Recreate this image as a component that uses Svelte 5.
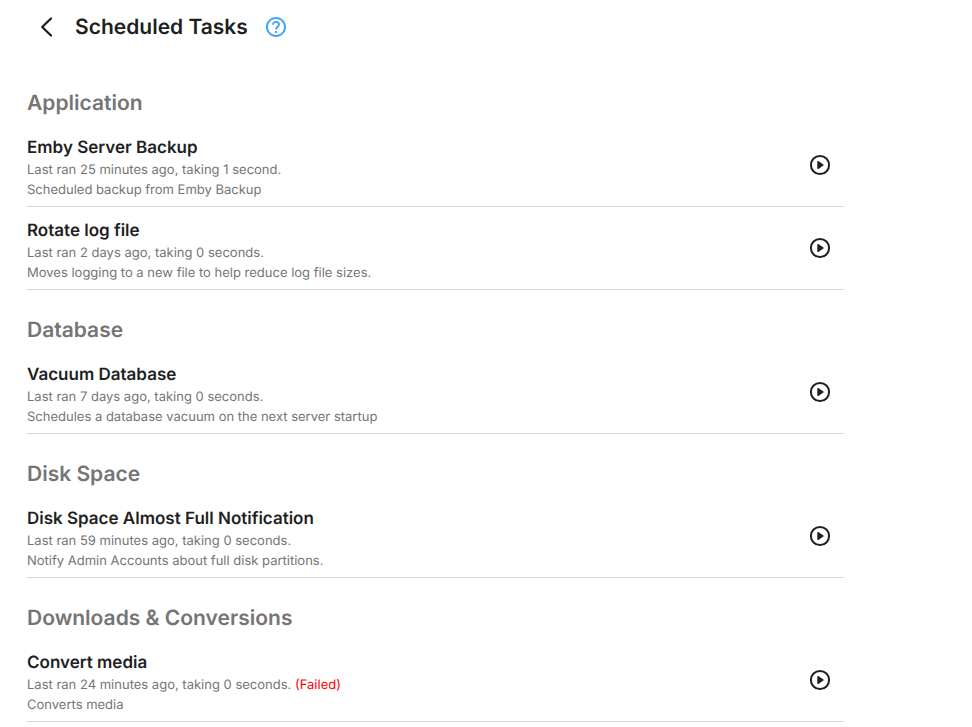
<script>
  const sections = [
    {
      name: "Application",
      tasks: [
        {
          name: "Emby Server Backup",
          lastRun: "Last ran 25 minutes ago, taking 1 second.",
          description: "Scheduled backup from Emby Backup"
        },
        {
          name: "Rotate log file",
          lastRun: "Last ran 2 days ago, taking 0 seconds.",
          description: "Moves logging to a new file to help reduce log file sizes."
        }
      ]
    },
    {
      name: "Database",
      tasks: [
        {
          name: "Vacuum Database",
          lastRun: "Last ran 7 days ago, taking 0 seconds.",
          description: "Schedules a database vacuum on the next server startup"
        }
      ]
    },
    {
      name: "Disk Space",
      tasks: [
        {
          name: "Disk Space Almost Full Notification",
          lastRun: "Last ran 59 minutes ago, taking 0 seconds.",
          description: "Notify Admin Accounts about full disk partitions."
        }
      ]
    },
    {
      name: "Downloads & Conversions",
      tasks: [
        {
          name: "Convert media",
          lastRun: "Last ran 24 minutes ago, taking 0 seconds.",
          failed: true,
          description: "Converts media"
        }
      ]
    }
  ];

  let running = $state("");
</script>

<header class="header">
  <button class="icon-button" type="button" aria-label="Back">
    <svg class="icon" viewBox="0 0 24 24" fill="none" stroke="currentColor" stroke-width="2.300" stroke-linecap="round" stroke-linejoin="round">
      <path d="M16 3.500 L7.200 12 L16 20.500" />
    </svg>
  </button>
  <h1 class="header__title">Scheduled Tasks</h1>
  <a class="header__help" href="#help" aria-label="Help">
    <svg class="icon" viewBox="0 0 24 24" fill="currentColor">
      <path d="M11 16h2v2h-2v-2zm1-14C6.480 2 2 6.480 2 12s4.480 10 10 10 10-4.480 10-10S17.520 2 12 2zm0 18c-4.410 0-8-3.590-8-8s3.590-8 8-8 8 3.590 8 8-3.590 8-8 8z" />
      <path d="M9 9.800C9 7.900 10.200 6.900 12 6.900s3 1.100 3 2.700c0 2.200-3 2.300-3 5" fill="none" stroke="currentColor" stroke-width="1.900" />
    </svg>
  </a>
</header>

<main class="tasks">
  {#each sections as section}
    <section class="section">
      <h2 class="section__title">{section.name}</h2>
      <ul class="section__list">
        {#each section.tasks as task}
          <li class="task">
            <div class="task__body">
              <h3 class="task__name">{task.name}</h3>
              <p class="task__text">
                {task.lastRun}
                {#if task.failed}<span class="task__failed">(Failed)</span>{/if}
              </p>
              <p class="task__text">{task.description}</p>
            </div>
            <button
              class="icon-button"
              type="button"
              aria-label={`Run ${task.name}`}
              aria-pressed={running === task.name}
              onclick={() => running = task.name}
            >
              <svg class="icon" viewBox="0 0 24 24">
                <circle cx="12" cy="12" r="9.100" fill="none" stroke="currentColor" stroke-width="2" />
                <path d="M10 8.700 L15 12 L10 15.300 Z" fill="currentColor" stroke="currentColor" stroke-width="1.400" stroke-linejoin="round" />
              </svg>
            </button>
          </li>
        {/each}
      </ul>
    </section>
  {/each}
</main>

<style>
  :global(body) {
    margin: 0;
    background: #fff;
    color: #1f1f1f;
    font-family: Inter, "Liberation Sans", sans-serif;
    text-rendering: geometricPrecision;
  }

  .header {
    display: flex;
    align-items: center;
    height: 54px;
    padding: 0 35px;
  }

  .header__title {
    margin: 0 16px;
    font-size: 21px;
    line-height: 33px;
    font-weight: 600;
  }

  .header__help {
    display: flex;
    color: #42a5f5;
  }

  .icon-button {
    display: flex;
    flex: none;
    padding: 0;
    border: 0;
    background: none;
    color: inherit;
    cursor: pointer;
  }

  .icon {
    display: block;
    width: 24px;
    height: 24px;
  }

  .tasks {
    padding: 9px 128px 0 27px;
  }

  .section {
    padding-top: 24px;
  }

  .section__title {
    margin: 0 0 4px;
    color: #757575;
    font-size: 21px;
    line-height: 33px;
    font-weight: 600;
  }

  .section__list {
    margin: 0;
    padding: 0;
    list-style: none;
  }

  .task {
    display: flex;
    align-items: center;
    padding-right: 12px;
    border-bottom: 1px solid #d9d9d9;
  }

  .task__body {
    flex: 1;
    padding: 12px 0 6px;
  }

  .task__name {
    margin: 0;
    font-size: 17px;
    line-height: 24px;
    font-weight: 600;
  }

  .task__text {
    margin: 0;
    color: #757575;
    font-size: 13px;
    line-height: 20px;
  }

  .task__failed {
    color: #f00;
  }
</style>
